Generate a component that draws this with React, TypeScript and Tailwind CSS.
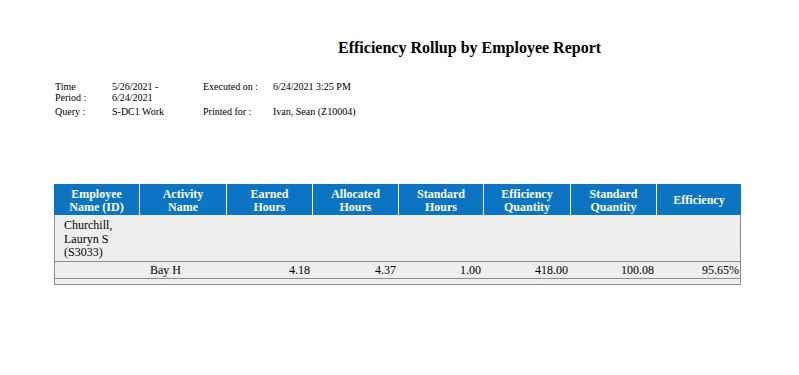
import React from "react";

const headers = [
  ["Employee", "Name (ID)"],
  ["Activity", "Name"],
  ["Earned", "Hours"],
  ["Allocated", "Hours"],
  ["Standard", "Hours"],
  ["Efficiency", "Quantity"],
  ["Standard", "Quantity"],
  ["Efficiency"],
];

const activityRow = ["", "Bay H", "4.18", "4.37", "1.00", "418.00", "100.08", "95.65%"];

export default function App() {
  return (
    <div
      className="w-[799px] h-[375px] bg-white text-black"
      style={{ fontFamily: '"Liberation Serif", "Times New Roman", serif' }}
    >
      {/* Title */}
      <div className="pt-[40px] pl-[338px] text-[16px] leading-[16px] font-bold">
        Efficiency Rollup by Employee Report
      </div>

      {/* Report params */}
      <div className="mt-[25px] pl-[55px] text-[10px] leading-[11px]">
        <div className="grid grid-cols-[57px_91px_70px_auto]">
          <div>
            Time
            <br />
            Period :
          </div>
          <div>
            5/26/2021 -
            <br />
            6/24/2021
          </div>
          <div>Executed on :</div>
          <div>6/24/2021 3:25 PM</div>
        </div>
        <div className="mt-[3px] grid grid-cols-[57px_91px_70px_auto]">
          <div>Query :</div>
          <div>S-DC1 Work</div>
          <div>Printed for :</div>
          <div>Ivan, Sean (Z10004)</div>
        </div>
      </div>

      {/* Table */}
      <div className="mt-[67px] ml-[54px] w-[687px] text-[12px]">
        <div className="grid h-[31px] grid-cols-[85px_86px_85px_85px_84px_86px_85px_84px] gap-x-px">
          {headers.map((h, i) => (
            <div
              key={i}
              className="flex items-center justify-center bg-[#0b75c4] pt-[3px] text-center font-bold leading-[13.5px] text-white"
            >
              <span>
                {h[0]}
                {h[1] && (
                  <>
                    <br />
                    {h[1]}
                  </>
                )}
              </span>
            </div>
          ))}
        </div>

        <div className="border-x border-[#8c8c8c] bg-[#efefef]">
          <div className="h-[46px] pt-[4px] pl-[9px] leading-[13.5px]">
            Churchill,
            <br />
            Lauryn S
            <br />
            (S3033)
          </div>
          <div className="grid h-[18px] grid-cols-[84px_86px_85px_85px_84px_86px_85px_84px] gap-x-px border-y border-[#8c8c8c] leading-[16px]">
            {activityRow.map((v, i) => (
              <div
                key={i}
                className={i === 1 ? "pl-[10px]" : "pr-[2px] text-right"}
              >
                {v}
              </div>
            ))}
          </div>
          <div className="h-[6px] border-b border-[#8c8c8c]" />
        </div>
      </div>
    </div>
  );
}
